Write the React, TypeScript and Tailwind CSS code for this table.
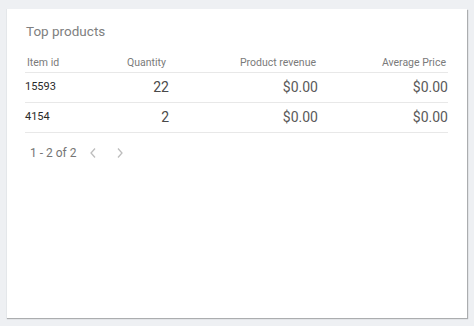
import React from "react";

export default function App() {
  const rows = [
    { id: "15593", qty: "22", rev: "$0.00", avg: "$0.00" },
    { id: "4154", qty: "2", rev: "$0.00", avg: "$0.00" },
  ];
  const cols = "grid grid-cols-[85px_59px_149px_130px]";
  return (
    <div className="w-[474px] h-[326px] bg-[#eef0f3] pt-[9px] pl-[6px]" style={{ fontFamily: "Roboto, 'Liberation Sans', sans-serif" }}>
      <div className="w-[461px] h-[309px] bg-white shadow-[1px_1px_1px_rgba(0,0,0,0.28)] border-l border-[#e4e7ea] pt-[14px] pl-[18px]">
        <div className="text-[13.5px] leading-[16px] text-[#808080] pl-[1px]">Top products</div>
        <div className="w-[423px] mt-[15px]">
          <div className={`${cols} h-[19px] items-center text-[10.5px] text-[#7a7a7a] border-b border-[#e8e8e8]`}>
            <div className="pl-[2px]">Item id</div>
            <div className="text-right pr-[3px]">Quantity</div>
            <div className="text-right pr-[2px]">Product revenue</div>
            <div className="text-right pr-[2px]">Average Price</div>
          </div>
          {rows.map((r) => (
            <div key={r.id} className={`${cols} h-[30px] items-center border-b border-[#e8e8e8]`}>
              <div className="text-[11px] text-[#2a2a2a]">{r.id}</div>
              <div className="text-right text-[14px] text-[#4a4a4a]">{r.qty}</div>
              <div className="text-right text-[14px] text-[#5a5a5a]">{r.rev}</div>
              <div className="text-right text-[14px] text-[#5a5a5a]">{r.avg}</div>
            </div>
          ))}
          <div className="flex items-center h-[40px] pl-[5px] text-[12px] text-[#757575]">
            <span>1 - 2 of 2</span>
            <svg width="10" height="12" viewBox="0 0 10 12" className="ml-[12px]">
              <path d="M7 1.5 L3 6 L7 10.5" fill="none" stroke="#bdbdbd" strokeWidth="1.3" />
            </svg>
            <svg width="10" height="12" viewBox="0 0 10 12" className="ml-[17px]">
              <path d="M3 1.5 L7 6 L3 10.5" fill="none" stroke="#bdbdbd" strokeWidth="1.3" />
            </svg>
          </div>
        </div>
      </div>
    </div>
  );
}
